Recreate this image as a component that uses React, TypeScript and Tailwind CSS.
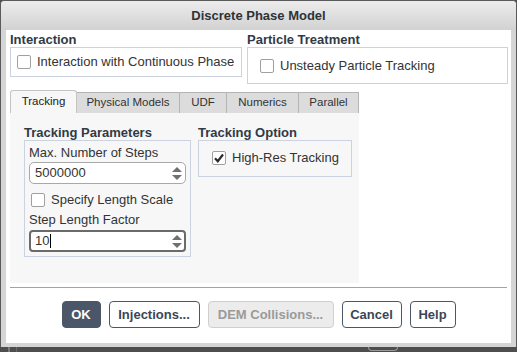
const tabs = ["Tracking", "Physical Models", "UDF", "Numerics", "Parallel"];
const tabWidths = ["w-[67px]", "w-[103px]", "w-[47px]", "w-[72px]", "w-[60px]"];

const buttons = [
  { label: "OK", width: "w-[39px]", kind: "primary" },
  { label: "Injections...", width: "w-[91px]", kind: "normal" },
  { label: "DEM Collisions...", width: "w-[126px]", kind: "disabled" },
  { label: "Cancel", width: "w-[60px]", kind: "normal" },
  { label: "Help", width: "w-[46px]", kind: "normal" },
];

function buttonStyle(kind: string) {
  if (kind === "primary") {
    return "bg-[#4b5768] border-[#4b5768] text-white";
  }

  if (kind === "disabled") {
    return "bg-[#ececec] border-[#cfcfcf] text-[#9a9a9a]";
  }

  return "bg-white border-[#4b5768] text-[#3a4657]";
}

function CheckBox({ checked }: { checked?: boolean }) {
  return (
    <span className="flex h-[14px] w-[14px] shrink-0 items-center justify-center rounded-[2px] border border-[#a0a0a0] bg-white">
      {checked && (
        <svg width="12" height="12" viewBox="0 0 12 12">
          <path d="M2 6.2 L4.8 9.2 L10 2.5" fill="none" stroke="#2b2b2b" strokeWidth="2.2" />
        </svg>
      )}
    </span>
  );
}

function Spinner() {
  return (
    <span className="flex flex-col items-center gap-[3px]">
      <span className="h-0 w-0 border-x-[5px] border-b-[5px] border-x-transparent border-b-[#707070]" />
      <span className="h-0 w-0 border-x-[5px] border-t-[5px] border-x-transparent border-t-[#707070]" />
    </span>
  );
}

export default function App() {
  return (
    <div className="flex h-[352px] w-[517px] flex-col overflow-hidden bg-[#4e4e4e] font-['Liberation_Sans',Arial,sans-serif] text-[13px] text-[#333]">
      <div className="flex h-[347px] flex-col rounded-t-[4px] border-x border-t border-[#5a5a5a] bg-[#d5d5d5]">
        <div className="flex h-[29px] shrink-0 items-center justify-center rounded-t-[4px] bg-gradient-to-b from-[#ececec] to-[#d2d2d2] font-bold text-[#2f3336]">
          Discrete Phase Model
        </div>

        <div className="mx-[5px] mb-[4px] flex flex-1 flex-col bg-white pl-[4px] pr-[3px] pt-[2px]">
          <div className="flex gap-[5px]">
            <div className="flex w-[232px] flex-col">
              <p className="h-[15px] font-bold leading-[15px] text-[#313a46]">Interaction</p>
              <div className="flex h-[30px] items-center gap-[6px] border border-[#ccd3e0] pl-[6px]">
                <CheckBox />
                <span>Interaction with Continuous Phase</span>
              </div>
            </div>

            <div className="flex flex-1 flex-col">
              <p className="h-[15px] font-bold leading-[15px] text-[#313a46]">Particle Treatment</p>
              <div className="flex h-[37px] items-center gap-[6px] border border-[#ccd3e0] pl-[12px]">
                <CheckBox />
                <span>Unsteady Particle Tracking</span>
              </div>
            </div>
          </div>

          <div className="mt-[6px] flex w-[349px] items-end">
            {tabs.map((tab, i) => (
              <div
                key={tab}
                className={`flex items-center justify-center border border-b-0 text-[11.5px] ${tabWidths[i]} ${
                  i === 0
                    ? "h-[23px] rounded-t-[3px] border-[#c4c4c4] bg-[#f7f7f7] text-[#222]"
                    : "h-[21px] border-[#b4b4b4] border-l-0 bg-[#dcdcdc] text-[#333]"
                }`}
              >
                {tab}
              </div>
            ))}
          </div>

          <div className="flex h-[170px] w-[349px] gap-[7px] bg-[#f7f7f7] pl-[14px] pt-[13px]">
            <div className="flex w-[167px] flex-col">
              <p className="h-[14px] font-bold leading-[14px] text-[#313a46]">Tracking Parameters</p>
              <div className="flex h-[117px] flex-col border border-[#ccd3e0] px-[4px] pt-[4px]">
                <p className="leading-[15px]">Max. Number of Steps</p>
                <div className="mt-[2px] flex h-[22px] items-center justify-between rounded-[5px] border border-[#a8a8a8] bg-white pl-[5px] pr-[3px]">
                  <span>5000000</span>
                  <Spinner />
                </div>
                <div className="mt-[9px] flex items-center gap-[6px] pl-[2px]">
                  <CheckBox />
                  <span className="leading-[14px]">Specify Length Scale</span>
                </div>
                <p className="mt-[5px] leading-[15px]">Step Length Factor</p>
                <div className="mt-[3px] flex h-[22px] items-center justify-between rounded-[4px] border-2 border-[#6a6a6a] bg-white pl-[4px] pr-[2px]">
                  <span className="flex items-center">
                    10
                    <span className="ml-[1px] h-[14px] w-px bg-black" />
                  </span>
                  <Spinner />
                </div>
              </div>
            </div>

            <div className="flex w-[154px] flex-col">
              <p className="h-[14px] font-bold leading-[14px] text-[#313a46]">Tracking Option</p>
              <div className="flex h-[37px] items-start gap-[6px] border border-[#ccd3e0] pl-[13px] pt-[10px]">
                <CheckBox checked />
                <span className="leading-[14px]">High-Res Tracking</span>
              </div>
            </div>
          </div>

          <div className="mt-[4px] h-px w-[497px] bg-[#a3a3a3]" />

          <div className="mt-[13px] flex justify-center gap-[8px] pr-[1px]">
            {buttons.map((button) => (
              <div
                key={button.label}
                className={`flex h-[27px] items-center justify-center rounded-[4px] border font-bold ${button.width} ${buttonStyle(
                  button.kind,
                )}`}
              >
                {button.label}
              </div>
            ))}
          </div>
        </div>
      </div>

      <div className="flex h-[5px] bg-[#4e4e4e] pl-[8px]">
        <div className="h-full w-[2px] bg-[#7a7a7a]" />
        <div className="ml-[6px] h-full w-px bg-[#6a6a6a]" />
        <div className="ml-[351px] h-[4px] w-[30px] rounded-b-[4px] border-x border-b border-[#9a9a9a]" />
      </div>
    </div>
  );
}
